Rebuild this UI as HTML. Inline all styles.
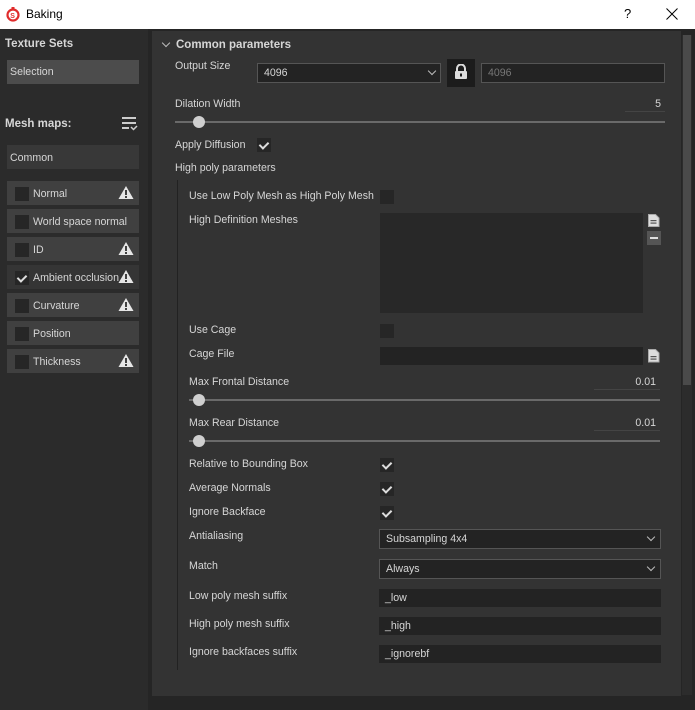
<!DOCTYPE html>
<html><head><style>
*{margin:0;padding:0;box-sizing:border-box}
body{width:695px;height:710px;background:#252525;font-family:"Liberation Sans",sans-serif;font-size:10.6px;color:#d6d6d6;position:relative;overflow:hidden}
.a{position:absolute}
.t{position:absolute;white-space:nowrap}
.item{position:absolute;left:7px;width:132px;height:24px;background:#404040}
.cb{position:absolute;width:14px;height:14px;background:#262626}
.inp{position:absolute;background:#232323}
.sl{position:absolute;height:2px;background:#6a6a6a}
.knob{position:absolute;width:12px;height:12px;border-radius:50%;background:#cfcfcf}
.num{position:absolute;border-bottom:1px solid #444;text-align:right;padding-right:4px}
.chev{position:absolute;width:6px;height:6px;border-right:1.2px solid #bbb;border-bottom:1.2px solid #bbb;transform:rotate(45deg)}
.ck{position:absolute;width:14px;height:14px;background:#262626}
.ck::after{content:"";position:absolute;left:4px;top:2px;width:4px;height:7px;border-right:2px solid #ddd;border-bottom:2px solid #ddd;transform:rotate(45deg)}
</style></head><body>
<div class="a" style="left:0;top:0;width:695px;height:29px;background:#fff"></div>
<svg class="a" style="left:5px;top:6px" width="16" height="16" viewBox="0 0 16 16"><circle cx="8" cy="9" r="5.5" fill="none" stroke="#e02c2c" stroke-width="2.2"/><rect x="6.5" y="1" width="3" height="3" fill="#e02c2c"/><text x="5.3" y="12" font-size="7" font-weight="bold" fill="#e02c2c" font-family="Liberation Sans">S</text></svg>
<div class="t" style="left:26px;top:7px;color:#000;font-size:12px">Baking</div>
<div class="t" style="left:624px;top:6px;color:#000;font-size:13px">?</div>
<svg class="a" style="left:666px;top:8px" width="12" height="12"><path d="M0.5 0.5L11.5 11.5M11.5 0.5L0.5 11.5" stroke="#000" stroke-width="1"/></svg>

<div class="a" style="left:0;top:29px;width:148px;height:681px;background:#2b2b2b"></div>
<div class="t" style="left:5px;top:38px;font-weight:bold;font-size:11.5px">Texture Sets</div>
<div class="item" style="top:60px;background:#4c4c4c"><span class="t" style="left:3px;top:6px">Selection</span></div>
<div class="t" style="left:5px;top:118px;font-weight:bold;font-size:11.5px">Mesh maps:</div>
<svg class="a" style="left:122px;top:116px" width="16" height="16"><rect x="0" y="1" width="14" height="2" fill="#ccc"/><rect x="0" y="6" width="14" height="2" fill="#ccc"/><rect x="0" y="11" width="7" height="2" fill="#ccc"/><path d="M9 11l2.5 2.5L15 10" stroke="#ccc" stroke-width="1.5" fill="none"/></svg>
<div class="item" style="top:145px;background:#383838"><span class="t" style="left:3px;top:7px">Common</span></div>

<div class="item" style="top:181px"><div class="cb" style="left:8px;top:6px"></div><span class="t" style="left:26px;top:7px">Normal</span></div>
<div class="item" style="top:209px"><div class="cb" style="left:8px;top:6px"></div><span class="t" style="left:26px;top:7px">World space normal</span></div>
<div class="item" style="top:237px"><div class="cb" style="left:8px;top:6px"></div><span class="t" style="left:26px;top:7px">ID</span></div>
<div class="item" style="top:265px;background:#353535"><div class="ck" style="left:8px;top:6px"></div><span class="t" style="left:26px;top:7px">Ambient occlusion</span></div>
<div class="item" style="top:293px"><div class="cb" style="left:8px;top:6px"></div><span class="t" style="left:26px;top:7px">Curvature</span></div>
<div class="item" style="top:321px"><div class="cb" style="left:8px;top:6px"></div><span class="t" style="left:26px;top:7px">Position</span></div>
<div class="item" style="top:349px"><div class="cb" style="left:8px;top:6px"></div><span class="t" style="left:26px;top:7px">Thickness</span></div>
<svg class="a" style="left:0;top:0" width="150" height="400">
<g fill="#e6e6e6"><path d="M126 186l-7.5 13h15z"/><path d="M126 242l-7.5 13h15z"/><path d="M126 270l-7.5 13h15z"/><path d="M126 298l-7.5 13h15z"/><path d="M126 354l-7.5 13h15z"/></g>
<g fill="#404040"><rect x="125" y="190" width="2" height="5"/><rect x="125" y="196" width="2" height="2"/><rect x="125" y="246" width="2" height="5"/><rect x="125" y="252" width="2" height="2"/><rect x="125" y="274" width="2" height="5"/><rect x="125" y="280" width="2" height="2"/><rect x="125" y="302" width="2" height="5"/><rect x="125" y="308" width="2" height="2"/><rect x="125" y="358" width="2" height="5"/><rect x="125" y="364" width="2" height="2"/></g>
</svg>

<div class="a" style="left:152px;top:31px;width:529px;height:665px;background:#333"></div>
<div class="a" style="left:682px;top:35px;width:10px;height:660px;background:#2c2c2c"></div>
<div class="a" style="left:683px;top:35px;width:8px;height:350px;background:#4a4a4a"></div>

<div class="chev" style="left:163px;top:40px"></div>
<div class="t" style="left:176px;top:39px;font-weight:bold;font-size:11.5px">Common parameters</div>
<div class="t" style="left:175px;top:60px">Output Size</div>
<div class="inp" style="left:257px;top:63px;width:184px;height:20px;border:1px solid #555"><span class="t" style="left:6px;top:3px">4096</span><div class="chev" style="left:171px;top:4px"></div></div>
<div class="a" style="left:447px;top:59px;width:28px;height:28px;background:#1c1c1c"></div>
<svg class="a" style="left:454px;top:64px" width="14" height="16"><path d="M3 7V4.5a4 4 0 0 1 8 0V7" stroke="#ddd" stroke-width="2" fill="none"/><rect x="1" y="7" width="12" height="8" rx="1" fill="#ddd"/><rect x="6" y="9.5" width="2" height="3" fill="#1c1c1c"/></svg>
<div class="inp" style="left:481px;top:63px;width:184px;height:20px;border:1px solid #555;color:#777"><span class="t" style="left:6px;top:3px">4096</span></div>
<div class="t" style="left:175px;top:98px">Dilation Width</div>
<div class="num" style="left:625px;top:98px;width:40px;height:14px">5</div>
<div class="sl" style="left:175px;top:121px;width:490px"></div><div class="knob" style="left:193px;top:116px"></div>
<div class="t" style="left:175px;top:139px">Apply Diffusion</div>
<div class="ck" style="left:257px;top:138px"></div>
<div class="t" style="left:175px;top:162px">High poly parameters</div>
<div class="a" style="left:177px;top:180px;width:1px;height:490px;background:#222"></div>

<div class="t" style="left:189px;top:190px">Use Low Poly Mesh as High Poly Mesh</div>
<div class="cb" style="left:380px;top:190px"></div>
<div class="t" style="left:189px;top:214px">High Definition Meshes</div>
<div class="inp" style="left:380px;top:213px;width:263px;height:100px;background:#282828"></div>
<svg class="a" style="left:647px;top:213px" width="14" height="32"><path d="M1.5 1.5h7l3.5 3.5v8.5h-10.5z" fill="#ddd" stroke="#aaa"/><rect x="3.5" y="7" width="6" height="1.2" fill="#555"/><rect x="3.5" y="9.5" width="6" height="1.2" fill="#555"/><rect x="0" y="18" width="14" height="14" fill="#555"/><rect x="3" y="24" width="8" height="2" fill="#ddd"/></svg>
<div class="t" style="left:189px;top:324px">Use Cage</div>
<div class="cb" style="left:380px;top:324px"></div>
<div class="t" style="left:189px;top:348px">Cage File</div>
<div class="inp" style="left:380px;top:347px;width:263px;height:18px"></div>
<svg class="a" style="left:647px;top:348px" width="14" height="16"><path d="M1.5 1.5h7l3.5 3.5v9h-10.5z" fill="#ddd" stroke="#aaa"/><rect x="3.5" y="8" width="6" height="1.2" fill="#555"/><rect x="3.5" y="10.5" width="6" height="1.2" fill="#555"/></svg>
<div class="t" style="left:189px;top:376px">Max Frontal Distance</div>
<div class="num" style="left:594px;top:376px;width:66px;height:14px">0.01</div>
<div class="sl" style="left:189px;top:399px;width:471px"></div><div class="knob" style="left:193px;top:394px"></div>
<div class="t" style="left:189px;top:417px">Max Rear Distance</div>
<div class="num" style="left:594px;top:417px;width:66px;height:14px">0.01</div>
<div class="sl" style="left:189px;top:440px;width:471px"></div><div class="knob" style="left:193px;top:435px"></div>
<div class="t" style="left:189px;top:458px">Relative to Bounding Box</div>
<div class="ck" style="left:380px;top:458px"></div>
<div class="t" style="left:189px;top:482px">Average Normals</div>
<div class="ck" style="left:380px;top:482px"></div>
<div class="t" style="left:189px;top:506px">Ignore Backface</div>
<div class="ck" style="left:380px;top:506px"></div>
<div class="t" style="left:189px;top:530px">Antialiasing</div>
<div class="inp" style="left:379px;top:529px;width:282px;height:20px;border:1px solid #555"><span class="t" style="left:6px;top:3px">Subsampling 4x4</span><div class="chev" style="left:268px;top:4px"></div></div>
<div class="t" style="left:189px;top:560px">Match</div>
<div class="inp" style="left:379px;top:559px;width:282px;height:20px;border:1px solid #555"><span class="t" style="left:6px;top:3px">Always</span><div class="chev" style="left:268px;top:4px"></div></div>
<div class="t" style="left:189px;top:590px">Low poly mesh suffix</div>
<div class="inp" style="left:379px;top:589px;width:282px;height:18px"><span class="t" style="left:6px;top:3px">_low</span></div>
<div class="t" style="left:189px;top:618px">High poly mesh suffix</div>
<div class="inp" style="left:379px;top:617px;width:282px;height:18px"><span class="t" style="left:6px;top:3px">_high</span></div>
<div class="t" style="left:189px;top:646px">Ignore backfaces suffix</div>
<div class="inp" style="left:379px;top:645px;width:282px;height:18px"><span class="t" style="left:6px;top:3px">_ignorebf</span></div>
</body></html>
